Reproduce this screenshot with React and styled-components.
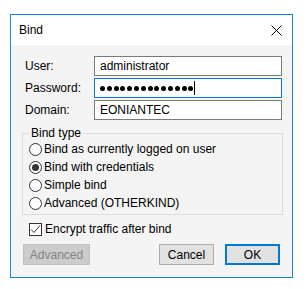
import React from "react";
import styled, { createGlobalStyle } from "styled-components";

const GlobalStyle = createGlobalStyle`
  body {
    margin: 0;
    background: #fff;
    font-family: "Liberation Sans", Arial, sans-serif;
    font-size: 12px;
    color: #000;
  }
`;

const Window = styled.div`
  box-sizing: border-box;
  margin: 14px 0 0 10px;
  width: 283px;
  height: 264px;
  border: 1px solid #1883d7;
  background: #f4f4f4;
  display: flex;
  flex-direction: column;
`;

const TitleBar = styled.div`
  height: 30px;
  background: #fff;
  display: flex;
  align-items: center;
  justify-content: space-between;
  padding: 0 10px 0 8px;
  flex-shrink: 0;
`;

const Title = styled.span`
  font-size: 12px;
`;

const Body = styled.div`
  padding: 11px 9px 0 11px;
  display: flex;
  flex-direction: column;
`;

const Form = styled.div`
  display: grid;
  grid-template-columns: 72px 188px;
  row-gap: 2px;
  align-items: center;
`;

const Label = styled.label`
  padding-left: 3px;
`;

const Field = styled.div`
  box-sizing: border-box;
  height: 20px;
  background: #fff;
  border: 1px solid ${(p) => (p.$focused ? "#0078d7" : "#7a7a7a")};
  display: flex;
  align-items: center;
  padding-left: 5px;
`;

const Dots = styled.div`
  display: flex;
  gap: 1.8px;
`;

const Dot = styled.span`
  width: 5px;
  height: 5px;
  border-radius: 50%;
  background: #000;
`;

const Caret = styled.span`
  width: 1px;
  height: 14px;
  background: #000;
  margin-left: 1px;
`;

const Group = styled.fieldset`
  margin: 6px 0 0 0;
  padding: 0 0 2px 6px;
  border: 1px solid #dcdcdc;
  min-width: 0;
`;

const Legend = styled.legend`
  padding: 0 2px;
`;

const Option = styled.div`
  height: 18px;
  display: flex;
  align-items: center;
  gap: 2px;
`;

const Radio = styled.span`
  box-sizing: border-box;
  width: 13px;
  height: 13px;
  border: 1px solid #333;
  border-radius: 50%;
  background: #fff;
  display: flex;
  align-items: center;
  justify-content: center;
  &::after {
    content: "";
    width: 7px;
    height: 7px;
    border-radius: 50%;
    background: ${(p) => (p.$checked ? "#333" : "transparent")};
  }
`;

const CheckRow = styled.div`
  height: 18px;
  display: flex;
  align-items: center;
  gap: 3px;
  margin: 5px 0 0 7px;
`;

const Check = styled.span`
  box-sizing: border-box;
  width: 13px;
  height: 13px;
  border: 1px solid #333;
  background: #fff;
  display: flex;
  align-items: center;
  justify-content: center;
`;

const Buttons = styled.div`
  display: flex;
  align-items: center;
  margin-top: 6px;
  padding: 0 3px 0 1px;
`;

const Button = styled.button`
  box-sizing: border-box;
  height: 21px;
  width: ${(p) => p.$w || 55}px;
  margin-left: ${(p) => p.$ml || 0}px;
  padding: 0;
  font-family: inherit;
  font-size: 12px;
  color: ${(p) => (p.disabled ? "#838383" : "#000")};
  background: ${(p) => (p.disabled ? "#cccccc" : "#e1e1e1")};
  border: ${(p) =>
    p.$default ? "2px solid #0078d7" : p.disabled ? "1px solid #bfbfbf" : "1px solid #adadad"};
`;

const Spacer = styled.div`
  flex: 1;
`;

const options = [
  { label: "Bind as currently logged on user" },
  { label: "Bind with credentials", checked: true },
  { label: "Simple bind" },
  { label: "Advanced (OTHERKIND)" },
];

export default function App() {
  return (
    <>
      <GlobalStyle />
      <Window>
        <TitleBar>
          <Title>Bind</Title>
          <svg width="11" height="11" viewBox="0 0 11 11">
            <path d="M0.5 0.5 L10.5 10.5 M10.5 0.5 L0.5 10.5" stroke="#000" strokeWidth="1" />
          </svg>
        </TitleBar>
        <Body>
          <Form>
            <Label>User:</Label>
            <Field>administrator</Field>
            <Label>Password:</Label>
            <Field $focused>
              <Dots>
                {Array.from({ length: 14 }).map((_, i) => (
                  <Dot key={i} />
                ))}
              </Dots>
              <Caret />
            </Field>
            <Label>Domain:</Label>
            <Field>EONIANTEC</Field>
          </Form>
          <Group>
            <Legend>Bind type</Legend>
            {options.map((o) => (
              <Option key={o.label}>
                <Radio $checked={o.checked} />
                {o.label}
              </Option>
            ))}
          </Group>
          <CheckRow>
            <Check>
              <svg width="11" height="11" viewBox="0 0 11 11">
                <path d="M1 5.5 L4 8.5 L10 1.5" fill="none" stroke="#333" strokeWidth="1" />
              </svg>
            </Check>
            Encrypt traffic after bind
          </CheckRow>
          <Buttons>
            <Button disabled $w={67}>Advanced</Button>
            <Spacer />
            <Button>Cancel</Button>
            <Button $default $ml={11}>OK</Button>
          </Buttons>
        </Body>
      </Window>
    </>
  );
}
